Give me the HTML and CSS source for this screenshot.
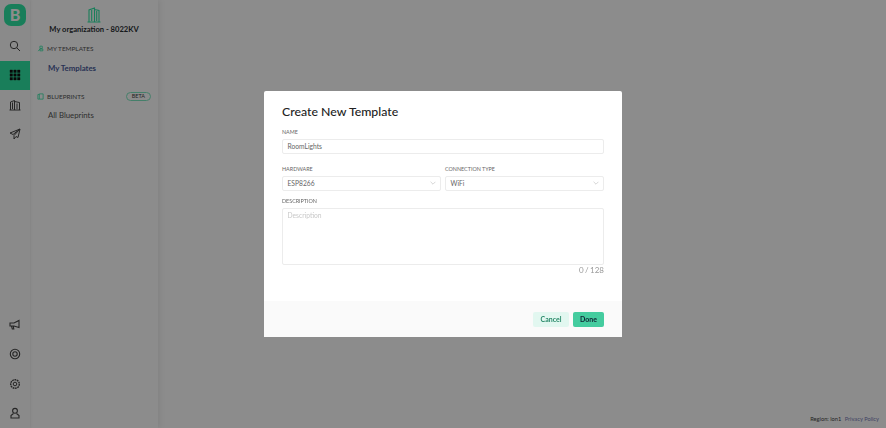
FILE: index.html
```html
<!DOCTYPE html>
<html lang="en">
<head>
  <meta charset="UTF-8" />
  <title>Create New Template</title>
  <link rel="stylesheet" href="styles.css">
</head>
<body>
  <div class="app">
    <nav class="rail">
      <div class="logo">B</div>
      <a class="rail-item">
        <svg viewBox="0 0 12 12" class="ico"><circle cx="5" cy="5" r="3.7"/><path d="M7.8 7.8 11 11"/></svg>
      </a>
      <a class="rail-item active">
        <svg viewBox="0 0 12 12" class="ico grid"><path d="M1 1h2.500v2.500H1zM4.750 1h2.500v2.500h-2.500zM8.500 1H11v2.500H8.500zM1 4.750h2.500v2.500H1zM4.750 4.750h2.500v2.500h-2.500zM8.500 4.750H11v2.500H8.500zM1 8.500h2.500V11H1zM4.750 8.500h2.500V11h-2.500zM8.500 8.500H11V11H8.500z"/></svg>
      </a>
      <a class="rail-item">
        <svg viewBox="0 0 12 12" class="ico"><path d="M1.500 11V3l4-1.500V11M5.500 2.500l5 1V11M.5 11h11M3.500 3.500V10M8 4.500V10"/></svg>
      </a>
      <a class="rail-item">
        <svg viewBox="0 0 12 12" class="ico"><path d="M11 1 1 5l3 1.500L11 1 5 7.500V11l2-2.500 2 1z"/></svg>
      </a>
      <div class="rail-bottom">
        <a class="rail-item">
          <svg viewBox="0 0 12 12" class="ico heavy"><path d="M1 4h4l5-2.500v7L5 7H1zM2.500 7l.8 3h1.500L4.200 7"/></svg>
        </a>
        <a class="rail-item">
          <svg viewBox="0 0 12 12" class="ico heavy"><circle cx="6" cy="6" r="4.700"/><circle cx="6" cy="6" r="2.200"/></svg>
        </a>
        <a class="rail-item">
          <svg viewBox="0 0 12 12" class="ico"><circle cx="6" cy="6" r="1.800"/><circle cx="6" cy="6" r="4.300" stroke-width="1.400" stroke-dasharray="1.800 .6"/></svg>
        </a>
        <a class="rail-item">
          <svg viewBox="0 0 12 12" class="ico heavy"><circle cx="6" cy="3.800" r="2.400"/><path d="M4.500 6.500 2 8.500V11h8V8.500L7.500 6.500"/></svg>
        </a>
      </div>
    </nav>

    <aside class="panel">
      <div class="org">
        <svg viewBox="0 0 16 16" class="org-ico"><path d="M3 15V3l5.500-2v14M8.500 2.500l4.500 1V15M1.500 15h13M5.700 3V14M10.700 4V14"/></svg>
        <div class="org-name">My organization - 8022KV</div>
      </div>
      <div class="section">
        <svg viewBox="0 0 12 12" class="sec-ico"><path d="M2 10.500 5 7M5 2h4v4H5zM5 7h5v3H5z"/></svg>
        <span>MY TEMPLATES</span>
      </div>
      <a class="panel-link current">My Templates</a>
      <div class="section second">
        <svg viewBox="0 0 12 12" class="sec-ico"><path d="M4 1.500h6.500v9H4zM4 2.500H1.500v8H4"/></svg>
        <span>BLUEPRINTS</span>
        <span class="beta">BETA</span>
      </div>
      <a class="panel-link">All Blueprints</a>
    </aside>

    <main class="content">
      <div class="legal">Region: lon1 <a class="privacy">Privacy Policy</a></div>
    </main>
  </div>

  <div class="overlay">
    <div class="modal">
      <div class="modal-body">
        <h2>Create New Template</h2>
        <div class="field">
          <label>NAME</label>
          <div class="input">RoomLights</div>
        </div>
        <div class="row">
          <div class="field">
            <label>HARDWARE</label>
            <div class="input select">ESP8266
              <svg viewBox="0 0 10 6" class="chev"><path d="M1 1l4 4 4-4"/></svg>
            </div>
          </div>
          <div class="field">
            <label>CONNECTION TYPE</label>
            <div class="input select">WiFi
              <svg viewBox="0 0 10 6" class="chev"><path d="M1 1l4 4 4-4"/></svg>
            </div>
          </div>
        </div>
        <div class="field">
          <label>DESCRIPTION</label>
          <div class="input area">Description</div>
          <div class="counter">0 / 128</div>
        </div>
      </div>
      <div class="modal-foot">
        <button type="button" class="btn btn-light">Cancel</button>
        <button type="button" class="btn btn-primary">Done</button>
      </div>
    </div>
  </div>
</body>
</html>
```

FILE: styles.css
```css
:root {
  --green: #2fe6a4;
  --line: #ececec;
  --dark: #2b2f33;
}

* {
  box-sizing: border-box;
}

html, body {
  height: 100%;
}

body {
  margin: 0;
  font-family: "Lato", "Open Sans", sans-serif;
  color: var(--dark);
  background: #fff;
  overflow: hidden;
}

.app {
  display: flex;
  height: 428px;
}

.rail {
  width: 30px;
  display: flex;
  flex-direction: column;
  background: #fcfcfc;
  box-shadow: 1px 0 2px rgba(0,0,0,0.06);
  z-index: 2;
}

.logo {
  width: 22px;
  height: 22px;
  margin: 4px 4px 5px;
  border-radius: 7px;
  background: var(--green);
  color: #fff;
  font-size: 16px;
  font-weight: 900;
  line-height: 22px;
  text-align: center;
}

.rail-item {
  height: 29.500px;
  display: flex;
  align-items: center;
  justify-content: center;
}

.rail-item.active {
  background: var(--green);
}

.rail-bottom {
  margin-top: auto;
}

.ico {
  width: 12px;
  height: 12px;
  fill: none;
  stroke: #444;
  stroke-width: 1;
}

.ico.heavy {
  stroke-width: 1.100;
}

.ico.grid {
  fill: #111;
  stroke: #111;
  stroke-width: .4;
}

.panel {
  width: 128px;
  padding-top: 7px;
  background: #fff;
  box-shadow: 2px 0 6px rgba(0,0,0,0.08);
  z-index: 1;
}

.org {
  display: flex;
  flex-direction: column;
  align-items: center;
  margin-bottom: 7px;
}

.org-ico {
  width: 16px;
  height: 16px;
  fill: none;
  stroke: var(--green);
  stroke-width: 1.100;
}

.org-name {
  font-size: 7.600px;
  font-weight: 700;
  line-height: 12px;
}

.section {
  display: flex;
  align-items: center;
  gap: 3px;
  height: 12px;
  padding: 0 7px;
  font-size: 6.400px;
  color: #555;
}

.section.second {
  margin-top: 16px;
}

.sec-ico {
  width: 7px;
  height: 7px;
  fill: none;
  stroke: var(--green);
  stroke-width: 1.300;
}

.beta {
  margin-left: auto;
  padding: 0 5px;
  border: 1px solid #7fe8c2;
  border-radius: 5px;
  font-size: 5.500px;
  line-height: 7px;
  color: #444;
}

.panel-link {
  display: block;
  margin: 7px 0 0 18px;
  font-size: 7.800px;
  line-height: 12px;
  color: #555;
}

.panel-link.current {
  font-weight: 700;
  color: #4a5a9a;
  margin-top: 8px;
}

.content {
  flex: 1;
  display: flex;
  align-items: flex-end;
  justify-content: flex-end;
  padding: 0 7px 5px 0;
}

.legal {
  font-size: 5.700px;
  line-height: 8px;
  color: #444;
}

.privacy {
  margin-left: 2px;
  color: #7a80b8;
}

.overlay {
  position: fixed;
  inset: 0;
  z-index: 10;
  display: flex;
  align-items: center;
  justify-content: center;
  background: rgba(0,0,0,0.45);
}

.modal {
  width: 358px;
  height: 246px;
  display: flex;
  flex-direction: column;
  background: #fff;
  border-radius: 2px;
}

.modal-body {
  flex: 1;
  padding: 12px 18px 0;
}

h2 {
  margin: 0 0 7px;
  font-size: 12.300px;
  font-weight: 500;
  line-height: 18px;
  color: #222;
}

.field {
  flex: 1;
  min-width: 0;
}

.field label {
  display: block;
  font-size: 5.400px;
  line-height: 8px;
  margin-bottom: 3px;
  color: #666;
}

.input {
  display: flex;
  align-items: center;
  justify-content: space-between;
  height: 14.500px;
  padding: 0 4.500px 1px;
  border: 1px solid var(--line);
  border-radius: 2px;
  font-size: 6.700px;
  color: #666;
}

.row {
  display: flex;
  gap: 4px;
  margin: 11.500px 0 6px;
}

.chev {
  width: 6px;
  height: 4px;
  fill: none;
  stroke: #bbb;
  stroke-width: 1;
}

.input.area {
  align-items: flex-start;
  height: 57px;
  padding-top: 2px;
  color: #c8c8c8;
}

.counter {
  margin-top: 1px;
  text-align: right;
  font-size: 8px;
  line-height: 9px;
  word-spacing: -.6px;
  color: #999;
}

.modal-foot {
  height: 36px;
  display: flex;
  align-items: center;
  justify-content: flex-end;
  gap: 4px;
  padding: 0 18px;
  background: #fafafa;
}

.btn {
  height: 15px;
  padding: 0;
  border: none;
  border-radius: 2px;
  font-family: inherit;
  font-size: 7px;
  font-weight: 700;
}

.btn-light {
  width: 36px;
  background: #e2f7f0;
  color: #2a8a6a;
}

.btn-primary {
  width: 31px;
  background: #45cc9f;
  color: #123;
}
```
